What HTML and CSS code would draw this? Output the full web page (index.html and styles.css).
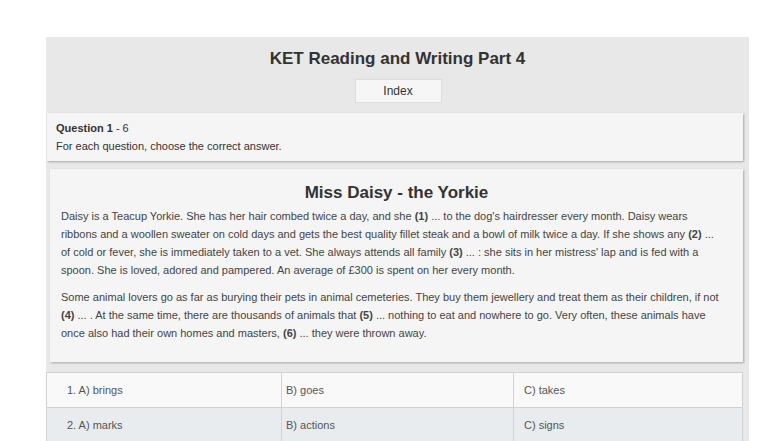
FILE: index.html
```html
<!DOCTYPE html>
<html>
<head>
<meta charset="utf-8">
<link rel="stylesheet" href="styles.css">
</head>
<body>
<div class="page">
  <h1 class="title">KET Reading and Writing Part 4</h1>
  <div class="nav"><a class="btn" href="#">Index</a></div>
  <div class="card question">
    <div><b>Question 1</b> - 6</div>
    <div>For each question, choose the correct answer.</div>
  </div>
  <div class="card passage">
    <h2 class="ptitle">Miss Daisy - the Yorkie</h2>
    <p>Daisy is a Teacup Yorkie. She has her hair combed twice a day, and she <b>(1)</b> ... to the dog's hairdresser every month. Daisy wears<br>ribbons and a woollen sweater on cold days and gets the best quality fillet steak and a bowl of milk twice a day. If she shows any <b>(2)</b> ...<br>of cold or fever, she is immediately taken to a vet. She always attends all family <b>(3)</b> ... : she sits in her mistress' lap and is fed with a<br>spoon. She is loved, adored and pampered. An average of £300 is spent on her every month.</p>
    <p>Some animal lovers go as far as burying their pets in animal cemeteries. They buy them jewellery and treat them as their children, if not<br><b>(4)</b> ... . At the same time, there are thousands of animals that <b>(5)</b> ... nothing to eat and nowhere to go. Very often, these animals have<br>once also had their own homes and masters, <b>(6)</b> ... they were thrown away.</p>
  </div>
  <table class="answers">
    <tr class="odd"><td class="c1">1. A) brings</td><td class="c2">B) goes</td><td class="c3">C) takes</td></tr>
    <tr class="even"><td class="c1">2. A) marks</td><td class="c2">B) actions</td><td class="c3">C) signs</td></tr>
  </table>
</div>
</body>
</html>
```
FILE: styles.css
```css
html, body {
  margin: 0;
  padding: 0;
  background: #ffffff;
  font-family: "Liberation Sans", Arial, sans-serif;
  color: #333333;
}
.page {
  margin: 37px 0 0 46px;
  width: 703px;
  height: 404px;
  background: #e8e8e8;
  overflow: hidden;
}
.title {
  margin: 0;
  padding-top: 12px;
  font-size: 17px;
  line-height: 20px;
  font-weight: bold;
  text-align: center;
  color: #333;
}
.nav {
  display: flex;
  justify-content: center;
  margin-top: 10px;
  padding-left: 1px;
}
.btn {
  display: block;
  width: 85px;
  height: 22px;
  line-height: 22px;
  text-align: center;
  background: #f6f6f6;
  border: 1px solid #dddddd;
  color: #333;
  font-size: 12px;
  text-decoration: none;
}
.card {
  background: #f5f5f5;
  box-shadow: 1px 1px 2px rgba(0,0,0,0.28);
}
.question {
  margin: 10px 6px 0 1px;
  padding: 6px 9px;
  font-size: 11px;
  line-height: 18px;
  color: #333;
}
.passage {
  margin: 8px 6px 0 4px;
  padding: 12px 11px 20px 11px;
}
.ptitle {
  margin: 0;
  font-size: 17px;
  line-height: 24px;
  text-align: center;
  font-weight: bold;
  color: #333;
}
.passage p {
  margin: 2px 0 0 0;
  font-size: 11px;
  line-height: 18px;
  color: #444;
  white-space: nowrap;
}
.passage p + p {
  margin-top: 9px;
}
.answers {
  margin: 10px 6px 0 0;
  width: 697px;
  border-collapse: collapse;
  font-size: 11px;
  color: #555;
}
.answers td {
  height: 34px;
  border: 1px solid #d2d2d2;
  padding: 0;
  vertical-align: middle;
}
.answers .c1 { width: 214px; padding-left: 20px; }
.answers .c2 { width: 227px; padding-left: 4px; }
.answers .c3 { padding-left: 10px; }
.odd td { background: #f9f9f9; }
.even td { background: #e8ecef; }
```
